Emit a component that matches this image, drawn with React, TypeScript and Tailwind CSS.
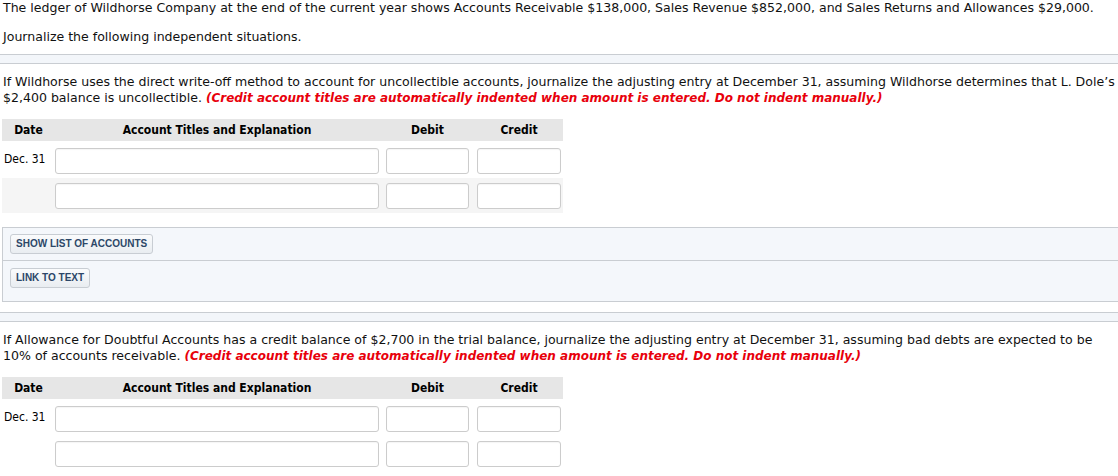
import React from "react";

const body = "font-['Verdana','DejaVu_Sans',sans-serif]";
const tahoma = "font-['Tahoma','DejaVu_Sans_Condensed','DejaVu_Sans',sans-serif]";

const Band = () => (
  <div className="h-[10px] border-y border-[#c9cdd2] bg-[#f3f6fa]" />
);

const Input = ({ w }: { w: string }) => (
  <input
    type="text"
    className={`${w} h-[26px] rounded-[3px] border border-[#cccccc] bg-white shadow-[inset_0_1px_1px_rgba(0,0,0,0.04)] outline-none`}
  />
);

function Journal({ striped }: { striped: boolean }) {
  const rows = ["Dec. 31", ""];
  return (
    <div className={`ml-[2px] w-[561px] ${tahoma} text-[12px] text-black`}>
      <div className="flex h-[22px] items-center bg-[#e6e6e6] font-bold">
        <div className="w-[53px] text-center">Date</div>
        <div className="w-[324px] text-center">Account Titles and Explanation</div>
        <div className="ml-[7px] w-[83px] text-center">Debit</div>
        <div className="ml-[8px] w-[84px] text-center">Credit</div>
      </div>
      <div className="mt-[2px]">
        {rows.map((d, i) => (
          <div
            key={i}
            className={`flex h-[35px] pt-[5px] ${striped && i === 1 ? "bg-[#f5f5f5]" : ""}`}
          >
            <div className="flex h-[22px] w-[53px] items-center pl-[2px]">{d}</div>
            <Input w="w-[324px]" />
            <div className="ml-[7px]">
              <Input w="w-[83px]" />
            </div>
            <div className="ml-[8px]">
              <Input w="w-[84px]" />
            </div>
          </div>
        ))}
      </div>
    </div>
  );
}

const Note = () => (
  <span className="text-[12px] font-bold italic text-[#e8000b]">
    (Credit account titles are automatically indented when amount is entered. Do not indent manually.)
  </span>
);

const Btn = ({ label }: { label: string }) => (
  <button className="block h-[20px] rounded-[3px] border border-[#c8cdd3] bg-gradient-to-b from-[#fafbfc] to-[#e9edf1] px-[5px] text-[10px] leading-[18px] font-bold text-[#2c4768] font-['Arial','Liberation_Sans',sans-serif]">
    {label}
  </button>
);

export default function App() {
  return (
    <div className={`w-[1118px] overflow-hidden bg-white ${body} text-[12.55px] leading-[16px] text-[#111]`}>
      <div className="px-[3px]">
        <p className="whitespace-nowrap">
          The ledger of Wildhorse Company at the end of the current year shows Accounts Receivable $138,000, Sales Revenue $852,000, and Sales Returns and Allowances $29,000.
        </p>
        <p className="mt-[13px] whitespace-nowrap">Journalize the following independent situations.</p>
      </div>

      <div className="mt-[9px]">
        <Band />
      </div>

      <div className="px-[3px] pt-[10px]">
        <p className="whitespace-nowrap">
          If Wildhorse uses the direct write-off method to account for uncollectible accounts, journalize the adjusting entry at December 31, assuming Wildhorse determines that L. Dole’s
          <br />
          $2,400 balance is uncollectible. <Note />
        </p>
      </div>

      <div className="mt-[13px]">
        <Journal striped />
      </div>

      <div className="ml-[2px] mt-[14px] border-y border-l border-[#c9cdd2] bg-[#f4f7fb]">
        <div className="px-[7px] pb-[6px] pt-[6px]">
          <Btn label="SHOW LIST OF ACCOUNTS" />
        </div>
        <div className="border-t border-[#c9cdd2] px-[7px] pb-[13px] pt-[7px]">
          <Btn label="LINK TO TEXT" />
        </div>
      </div>

      <div className="mt-[10px]">
        <Band />
      </div>

      <div className="px-[3px] pt-[10px]">
        <p className="whitespace-nowrap">
          If Allowance for Doubtful Accounts has a credit balance of $2,700 in the trial balance, journalize the adjusting entry at December 31, assuming bad debts are expected to be
          <br />
          10% of accounts receivable. <Note />
        </p>
      </div>

      <div className="mt-[13px] pb-[20px]">
        <Journal striped={false} />
      </div>
    </div>
  );
}
